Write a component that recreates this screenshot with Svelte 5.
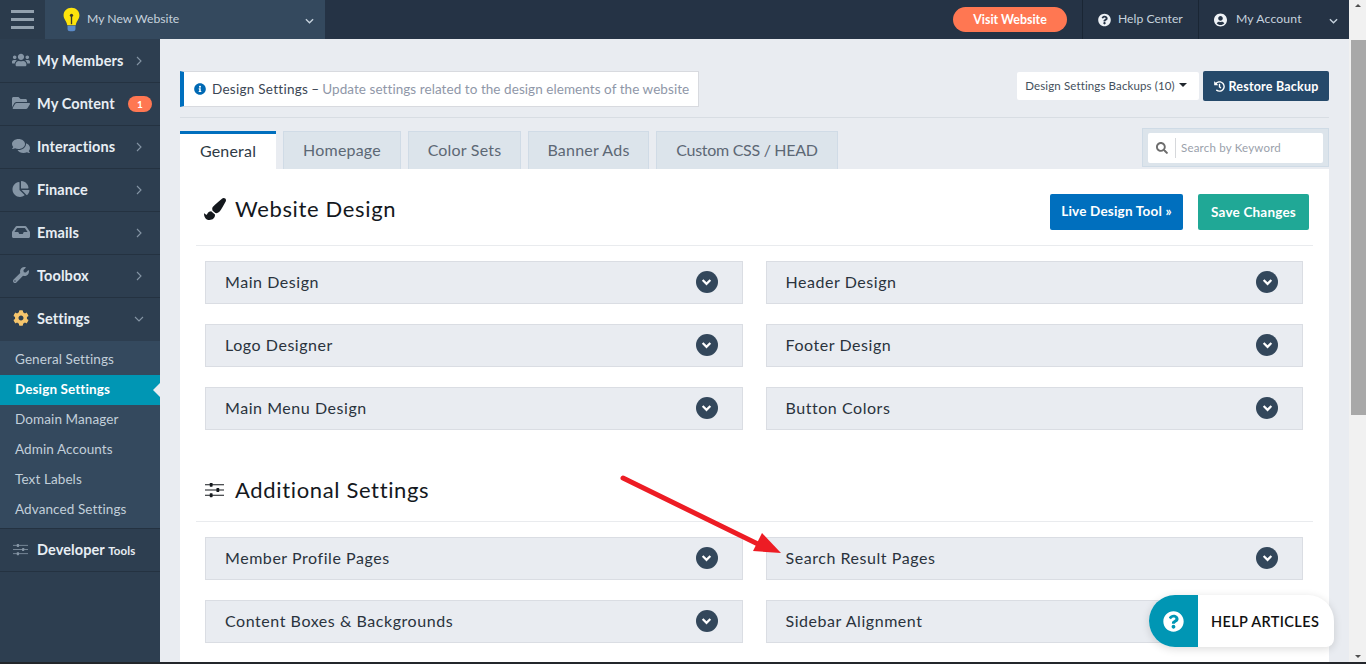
<script lang="ts">
	const icons: Record<string, [string, string]> = {
		users: ['0 0 640 512', 'M96 224c35.3 0 64-28.7 64-64s-28.7-64-64-64-64 28.7-64 64 28.7 64 64 64zm448 0c35.3 0 64-28.7 64-64s-28.7-64-64-64-64 28.7-64 64 28.7 64 64 64zm32 32h-64c-17.6 0-33.5 7.1-45.1 18.6 40.3 22.1 68.9 62 75.1 109.4h66c17.7 0 32-14.3 32-32v-32c0-35.3-28.7-64-64-64zm-256 0c61.9 0 112-50.1 112-112S381.9 32 320 32 208 82.1 208 144s50.1 112 112 112zm76.8 32h-8.3c-20.8 10-43.9 16-68.5 16s-47.6-6-68.5-16h-8.3C179.6 288 128 339.6 128 403.2V432c0 26.5 21.5 48 48 48h288c26.5 0 48-21.5 48-48v-28.8c0-63.6-51.6-115.2-115.2-115.2zm-223.7-13.4C161.5 263.1 145.6 256 128 256H64c-35.3 0-64 28.7-64 64v32c0 17.7 14.3 32 32 32h65.9c6.3-47.4 34.9-87.3 75.2-109.4z'],
		folder: ['0 0 576 512', 'M572.694 292.093L500.27 416.248A63.997 63.997 0 0 1 444.989 448H45.025c-18.523 0-30.064-20.093-20.731-36.093l72.424-124.155A64 64 0 0 1 152 256h399.964c18.523 0 30.064 20.093 20.73 36.093zM152 224h328v-48c0-26.51-21.49-48-48-48H272l-64-64H48C21.49 64 0 85.49 0 112v278.046l69.077-118.418C86.214 242.25 117.989 224 152 224z'],
		comments: ['0 0 576 512', 'M416 192c0-88.4-93.1-160-208-160S0 103.6 0 192c0 34.3 14.1 65.9 38 92-13.4 30.2-35.5 54.2-35.8 54.5-2.2 2.3-2.8 5.7-1.5 8.7S4.8 352 8 352c36.6 0 66.9-12.3 88.7-25 32.2 15.7 70.3 25 111.3 25 114.9 0 208-71.6 208-160zm122 220c23.9-26 38-57.7 38-92 0-66.9-53.5-124.2-129.3-148.1.9 6.6 1.3 13.3 1.3 20.1 0 105.9-107.7 192-240 192-10.8 0-21.3-.8-31.7-1.9C207.8 439.6 281.8 480 368 480c41 0 79.1-9.2 111.3-25 21.8 12.7 52.1 25 88.7 25 3.2 0 6.1-1.9 7.3-4.8 1.3-2.9.7-6.3-1.5-8.7-.3-.3-22.4-24.2-35.8-54.5z'],
		pie: ['0 0 544 512', 'M527.79 288H290.5l158.03 158.03c6.04 6.04 15.98 6.53 22.19.68 38.7-36.46 65.32-85.61 73.13-140.86 1.34-9.46-6.51-17.85-16.06-17.85zm-15.83-64.8C503.72 103.74 408.26 8.28 288.8.04 279.68-.59 272 7.1 272 16.24V240h223.77c9.14 0 16.82-7.68 16.19-16.8zM224 288V50.71c0-9.55-8.39-17.4-17.84-16.06C86.99 51.49-4.1 155.6.14 280.37 4.5 408.51 114.83 513.59 243.03 511.98c50.4-.63 96.97-16.87 135.26-44.03 7.9-5.6 8.42-17.23 1.57-24.08L224 288z'],
		inbox: ['0 0 576 512', 'M567.938 243.908L462.25 85.374A48.003 48.003 0 0 0 422.311 64H153.689a48 48 0 0 0-39.938 21.374L8.062 243.908A47.994 47.994 0 0 0 0 270.533V400c0 26.51 21.49 48 48 48h480c26.51 0 48-21.49 48-48V270.533a47.994 47.994 0 0 0-8.062-26.625zM162.252 128h251.497l85.333 128H376l-32 64H232l-32-64H76.918l85.334-128z'],
		wrench: ['0 0 512 512', 'M507.73 109.1c-2.24-9.03-13.54-12.09-20.12-5.51l-74.36 74.36-67.88-11.31-11.31-67.88 74.36-74.36c6.62-6.62 3.43-17.9-5.66-20.16-47.38-11.74-99.55.91-136.58 37.93-39.64 39.64-50.55 97.1-34.05 147.2L18.74 402.76c-24.99 24.99-24.99 65.51 0 90.5 24.99 24.99 65.51 24.99 90.5 0l213.21-213.21c50.12 16.71 107.47 5.68 147.37-34.22 37.07-37.07 49.7-89.32 37.91-136.73zM64 472c-13.25 0-24-10.75-24-24 0-13.26 10.75-24 24-24s24 10.74 24 24c0 13.25-10.75 24-24 24z'],
		cog: ['0 0 512 512', 'M487.4 315.7l-42.6-24.6c4.3-23.2 4.3-47 0-70.2l42.6-24.6c4.9-2.8 7.1-8.6 5.5-14-11.1-35.6-30-67.8-54.7-94.6-3.8-4.1-10-5.1-14.8-2.3L380.8 110c-17.9-15.4-38.5-27.3-60.8-35.1V25.8c0-5.6-3.9-10.5-9.4-11.7-36.7-8.2-74.3-7.8-109.2 0-5.5 1.2-9.4 6.1-9.4 11.7V75c-22.2 7.9-42.8 19.8-60.8 35.1L88.7 85.5c-4.9-2.8-11-1.9-14.8 2.3-24.7 26.7-43.6 58.9-54.7 94.6-1.7 5.4.6 11.2 5.5 14L67.3 221c-4.3 23.2-4.3 47 0 70.2l-42.6 24.6c-4.9 2.8-7.1 8.6-5.5 14 11.1 35.6 30 67.8 54.7 94.6 3.8 4.1 10 5.1 14.8 2.3l42.6-24.6c17.9 15.4 38.5 27.3 60.8 35.1v49.2c0 5.6 3.9 10.5 9.4 11.7 36.7 8.2 74.3 7.8 109.2 0 5.5-1.2 9.4-6.1 9.4-11.7v-49.2c22.2-7.9 42.8-19.8 60.8-35.1l42.6 24.6c4.9 2.8 11 1.9 14.8-2.3 24.7-26.7 43.6-58.9 54.7-94.6 1.5-5.5-.7-11.3-5.6-14.1zM256 336c-44.1 0-80-35.9-80-80s35.9-80 80-80 80 35.9 80 80-35.9 80-80 80z'],
		brush: ['0 0 512 512', 'M167.02 309.34c-40.12 2.58-76.53 17.86-97.19 72.3-2.35 6.21-8 9.98-14.59 9.98-11.11 0-45.46-27.67-55.25-34.35C0 439.62 37.93 512 128 512c75.86 0 128-43.77 128-120.19 0-3.11-.65-6.08-.97-9.13l-88.01-73.34zM457.89 0c-15.16 0-29.37 6.71-40.21 16.45C213.27 199.05 192 203.34 192 257.09c0 13.7 3.25 26.76 8.73 38.7l63.82 53.18c7.21 1.8 14.64 3.03 22.39 3.03 62.11 0 98.11-45.47 211.16-256.46 7.38-14.35 13.9-29.85 13.9-45.99C512 20.64 486 0 457.89 0z'],
		info: ['0 0 512 512', 'M256 8C119.043 8 8 119.083 8 256c0 136.997 111.043 248 248 248s248-111.003 248-248C504 119.083 392.957 8 256 8zm0 110c23.196 0 42 18.804 42 42s-18.804 42-42 42-42-18.804-42-42 18.804-42 42-42zm56 254c0 6.627-5.373 12-12 12h-88c-6.627 0-12-5.373-12-12v-24c0-6.627 5.373-12 12-12h12v-64h-12c-6.627 0-12-5.373-12-12v-24c0-6.627 5.373-12 12-12h64c6.627 0 12 5.373 12 12v100h12c6.627 0 12 5.373 12 12v24z'],
		question: ['0 0 512 512', 'M504 256c0 136.997-111.043 248-248 248S8 392.997 8 256C8 119.083 119.043 8 256 8s248 111.083 248 248zM262.655 90c-54.497 0-89.255 22.957-116.549 63.758-3.536 5.286-2.353 12.415 2.715 16.258l34.699 26.31c5.205 3.947 12.621 3.008 16.665-2.122 17.864-22.658 30.113-35.797 57.303-35.797 20.429 0 45.698 13.148 45.698 32.958 0 14.976-12.363 22.667-32.534 33.976C247.128 238.528 216 254.941 216 296v4c0 6.627 5.373 12 12 12h56c6.627 0 12-5.373 12-12v-1.333c0-28.462 83.186-29.647 83.186-106.667 0-58.002-60.165-102-116.531-102zM256 338c-25.365 0-46 20.635-46 46 0 25.364 20.635 46 46 46s46-20.636 46-46c0-25.365-20.635-46-46-46z'],
		account: ['0 0 496 512', 'M248 8C111 8 0 119 0 256s111 248 248 248 248-111 248-248S385 8 248 8zm0 96c48.6 0 88 39.4 88 88s-39.4 88-88 88-88-39.4-88-88 39.4-88 88-88zm0 344c-58.7 0-111.3-26.6-146.5-68.2 18.8-35.4 55.6-59.8 98.5-59.8 2.4 0 4.8.4 7.1 1.1 13 4.2 26.6 6.9 40.9 6.9 14.3 0 28-2.7 40.9-6.9 2.3-.7 4.7-1.1 7.1-1.1 42.9 0 79.7 24.4 98.5 59.8C359.3 421.4 306.7 448 248 448z'],
		history: ['0 0 512 512', 'M504 255.531c.253 136.64-111.18 248.372-247.82 248.468-59.015.042-113.223-20.53-155.822-54.911-11.077-8.94-11.905-25.541-1.839-35.607l11.267-11.267c8.609-8.609 22.353-9.551 31.891-1.984C173.062 425.135 212.781 440 256 440c101.705 0 184-82.311 184-184 0-101.705-82.311-184-184-184-48.814 0-93.149 18.969-126.068 49.932l50.754 50.754c10.08 10.08 2.941 27.314-11.313 27.314H24c-8.837 0-16-7.163-16-16V38.627c0-14.254 17.234-21.393 27.314-11.314l49.372 49.372C129.209 34.136 189.552 8 256 8c136.81 0 247.747 110.78 248 247.531zm-180.912 78.784l9.823-12.63c8.138-10.463 6.253-25.542-4.21-33.679L288 256.349V152c0-13.255-10.745-24-24-24h-16c-13.255 0-24 10.745-24 24v135.651l65.409 50.874c10.463 8.137 25.541 6.253 33.679-4.21z'],
		search: ['0 0 512 512', 'M505 442.7L405.3 343c-4.5-4.5-10.6-7-17-7H372c27.6-35.3 44-79.7 44-128C416 93.1 322.9 0 208 0S0 93.1 0 208s93.1 208 208 208c48.3 0 92.7-16.4 128-44v16.3c0 6.4 2.5 12.5 7 17l99.7 99.7c9.4 9.4 24.6 9.4 33.9 0l28.3-28.3c9.4-9.4 9.4-24.6.1-34zM208 336c-70.7 0-128-57.2-128-128 0-70.7 57.2-128 128-128 70.7 0 128 57.2 128 128 0 70.7-57.2 128-128 128z']
	};

	const menu = [
		{ label: 'My Members', icon: 'users', arrow: true },
		{ label: 'My Content', icon: 'folder', badge: '1' },
		{ label: 'Interactions', icon: 'comments', arrow: true },
		{ label: 'Finance', icon: 'pie', arrow: true },
		{ label: 'Emails', icon: 'inbox', arrow: true },
		{ label: 'Toolbox', icon: 'wrench', arrow: true }
	];
	const subMenu = ['General Settings', 'Design Settings', 'Domain Manager', 'Admin Accounts', 'Text Labels', 'Advanced Settings'];
	const tabs = ['General', 'Homepage', 'Color Sets', 'Banner Ads', 'Custom CSS / HEAD'];
	const designItems = ['Main Design', 'Header Design', 'Logo Designer', 'Footer Design', 'Main Menu Design', 'Button Colors'];
	const extraItems = ['Member Profile Pages', 'Search Result Pages', 'Content Boxes & Backgrounds', 'Sidebar Alignment'];
</script>

{#snippet icon(name: string, cls: string)}
	<svg class={cls} viewBox={icons[name][0]} aria-hidden="true"><path d={icons[name][1]} /></svg>
{/snippet}

{#snippet sliders(cls: string)}
	<svg class={cls} viewBox="0 0 20 16" aria-hidden="true">
		<path d="M0 2.5h20M0 8h20M0 13.5h20" fill="none" stroke="currentColor" stroke-width="1.1" />
		<rect x="5" y="0.5" width="3" height="4" rx="0.6" />
		<rect x="12" y="6" width="3" height="4" rx="0.6" />
		<rect x="5" y="11.5" width="3" height="4" rx="0.6" />
	</svg>
{/snippet}

{#snippet chevron(cls: string)}
	<svg class={cls} viewBox="0 0 10 6" aria-hidden="true"><path d="M1 1l4 4 4-4" fill="none" stroke="currentColor" stroke-width="1.5" /></svg>
{/snippet}

{#snippet item(label: string)}
	<div class="acc">
		<span>{label}</span>
		<span class="acc-dot">
			<svg viewBox="0 0 12 8" aria-hidden="true"><path d="M1.8 1.8L6 6l4.2-4.2" fill="none" stroke="currentColor" stroke-width="2.4" /></svg>
		</span>
	</div>
{/snippet}

<div class="app">
	<div class="window">
		<div class="page">
			<header class="topbar">
				<button class="burger" aria-label="Menu"><i></i><i></i><i></i></button>
				<div class="site">
					<svg class="bulb" viewBox="0 0 18 26" aria-hidden="true">
						<path d="M9 0.5C4.2 0.5 0.6 4 0.6 8.6c0 4.2 3.3 6.1 3.9 10.4h9c.6-4.3 3.9-6.2 3.9-10.4C17.4 4 13.8 0.5 9 0.5z" fill="#fde30b" />
						<path d="M9 18V9" stroke="#3a3a2a" stroke-width="1.4" />
						<circle cx="9" cy="8.6" r="1.7" fill="#3a3a2a" />
						<path d="M4.8 19.5h8.4v3.6c0 1.4-1.2 2.4-2.6 2.4H7.4c-1.4 0-2.6-1-2.6-2.4z" fill="#5b8bc9" />
					</svg>
					<span class="site-name">My New Website</span>
					{@render chevron('site-chev')}
				</div>
				<div class="top-right">
					<span class="visit">Visit Website</span>
					<span class="top-link help">{@render icon('question', 'top-ico')}<span class="top-text">Help Center</span></span>
					<span class="top-link account">{@render icon('account', 'top-ico')}<span class="top-text">My Account</span>{@render chevron('acc-chev')}</span>
				</div>
			</header>

			<div class="body">
				<nav class="sidebar">
					{#each menu as m}
						<div class="nav-item">
							{@render icon(m.icon, 'nav-ico')}
							<span class="nav-label">{m.label}</span>
							{#if m.badge}<span class="badge">{m.badge}</span>{/if}
							{#if m.arrow}
								<svg class="nav-arrow" viewBox="0 0 6 10" aria-hidden="true"><path d="M1 1l4 4-4 4" fill="none" stroke="currentColor" stroke-width="1.1" /></svg>
							{/if}
						</div>
					{/each}
					<div class="nav-item open">
						{@render icon('cog', 'nav-ico cog')}
						<span class="nav-label">Settings</span>
						<svg class="nav-down" viewBox="0 0 10 6" aria-hidden="true"><path d="M1 1l4 4 4-4" fill="none" stroke="currentColor" stroke-width="1.1" /></svg>
					</div>
					<div class="sub">
						{#each subMenu as s, i}
							<div class="sub-item" class:active={i === 1}>{s}</div>
						{/each}
					</div>
					<div class="nav-item dev">
						{@render sliders('dev-ico')}
						<span class="nav-label">Developer <small>Tools</small></span>
					</div>
				</nav>

				<main class="content">
					<div class="head">
						<div class="notice">
							{@render icon('info', 'info-ico')}
							<strong>Design Settings</strong>
							<span class="dash">–</span>
							<span class="muted">Update settings related to the design elements of the website</span>
						</div>
						<div class="head-actions">
							<span class="backups">Design Settings Backups (10)<i class="caret"></i></span>
							<span class="restore">{@render icon('history', 'hist-ico')}Restore Backup</span>
						</div>
					</div>

					<div class="tabs">
						{#each tabs as t, i}
							<span class="tab" class:current={i === 0}>{t}</span>
						{/each}
						<div class="search">
							<div class="search-inner">
								{@render icon('search', 'search-ico')}
								<span>Search by Keyword</span>
							</div>
						</div>
					</div>

					<section class="panel">
						<div class="section-head first">
							<h2>{@render icon('brush', 'h-ico')}Website Design</h2>
							<div class="head-btns">
								<span class="btn live">Live Design Tool »</span>
								<span class="btn save">Save Changes</span>
							</div>
						</div>
						<div class="grid">
							{#each designItems as d}{@render item(d)}{/each}
						</div>
						<div class="section-head second">
							<h2>{@render sliders('h-sliders')}Additional Settings</h2>
						</div>
						<div class="grid">
							{#each extraItems as d}{@render item(d)}{/each}
						</div>
					</section>
				</main>
			</div>
		</div>

		<div class="scrollbar">
			<i class="up"></i>
			<div class="thumb"></div>
			<i class="down"></i>
		</div>
	</div>
	<div class="bottom-edge"></div>

	<svg class="pointer" viewBox="0 0 170 90" aria-hidden="true">
		<path d="M3 3L146 73" stroke="#ed1c24" stroke-width="5" stroke-linecap="round" fill="none" />
		<path d="M142 58L161 78 133 76z" fill="#ed1c24" />
	</svg>

	<div class="help-widget">
		<span class="help-tab">{@render icon('question', 'help-ico')}</span>
		<span class="help-text">HELP ARTICLES</span>
	</div>
</div>

<style>
	:global(body) {
		margin: 0;
		overflow: hidden;
		font-family: 'Lato', 'Open Sans', sans-serif;
	}
	svg {
		fill: currentColor;
		display: block;
		flex: none;
	}
	.app {
		position: relative;
		height: 664px;
		display: flex;
		flex-direction: column;
		overflow: hidden;
		background: #e9ecf1;
	}
	.window {
		flex: 1;
		min-height: 0;
		display: flex;
	}
	.page {
		flex: 1;
		min-width: 0;
		display: flex;
		flex-direction: column;
	}
	.bottom-edge {
		height: 2px;
		background: #23262b;
	}

	/* top bar */
	.topbar {
		height: 39px;
		flex: none;
		display: flex;
		background: #253345;
		color: #dfe6ee;
	}
	.burger {
		width: 45px;
		padding: 0 11px;
		border: 0;
		background: #2b3b4c;
		display: flex;
		flex-direction: column;
		justify-content: center;
		gap: 5px;
	}
	.burger i {
		display: block;
		height: 3px;
		background: #93a1ae;
	}
	.site {
		width: 280px;
		background: #34495e;
		display: flex;
		align-items: center;
		padding: 0 11px 0 18px;
		box-sizing: border-box;
		font-size: 12.2px;
		color: #c6d2dd;
	}
	.site-name {
		padding-bottom: 2px;
	}
	.bulb {
		width: 17px;
		height: 25px;
		margin-right: 7px;
		margin-top: -1px;
	}
	.site-chev {
		width: 9px;
		height: 6px;
		margin-left: auto;
		margin-top: 2px;
	}
	.top-right {
		margin-left: auto;
		display: flex;
		align-items: center;
	}
	.visit {
		width: 114px;
		height: 25px;
		margin-right: 15px;
		margin-top: -1px;
		border-radius: 13px;
		background: #ff7752;
		color: #fff;
		font-size: 12.4px;
		font-weight: 700;
		display: flex;
		align-items: center;
		justify-content: center;
	}
	.top-link {
		height: 39px;
		display: flex;
		align-items: center;
		border-left: 1px solid #1a2634;
		font-size: 12.2px;
		color: #c6d2dd;
		box-sizing: border-box;
	}
	.top-text {
		padding-bottom: 2px;
	}
	.help {
		width: 116px;
		padding-left: 15px;
	}
	.account {
		width: 151px;
		padding-left: 15px;
		letter-spacing: 0.15px;
	}
	.top-ico {
		width: 13px;
		height: 14px;
		margin-right: 7px;
		color: #eef2f6;
	}
	.account .top-text {
		margin-left: 2px;
	}
	.acc-chev {
		width: 9px;
		height: 6px;
		margin-left: auto;
		margin-right: 11px;
		margin-top: 2px;
	}

	/* sidebar */
	.body {
		flex: 1;
		min-height: 0;
		display: flex;
	}
	.sidebar {
		width: 160px;
		flex: none;
		padding-top: 1px;
		background: #2d3e50;
	}
	.nav-item {
		height: 43px;
		box-sizing: border-box;
		border-bottom: 1px solid #243241;
		display: flex;
		align-items: center;
		padding-left: 12px;
		color: #e8eef4;
		font-size: 14.5px;
		font-weight: 700;
	}
	.nav-ico {
		width: 18px;
		height: 16px;
		margin-right: 7px;
		color: #8595a5;
		margin-top: -3px;
	}
	.nav-ico.cog {
		color: #f6c56c;
	}
	.nav-label {
		letter-spacing: 0.1px;
		white-space: nowrap;
		padding-bottom: 1px;
	}
	.nav-label small {
		font-size: 11.5px;
	}
	.nav-arrow {
		width: 6px;
		height: 10px;
		color: #8595a5;
		position: absolute;
		left: 136px;
		margin-top: -1px;
	}
	.nav-down {
		width: 10px;
		height: 6px;
		color: #8595a5;
		position: absolute;
		left: 134px;
	}
	.badge {
		position: absolute;
		left: 128px;
		width: 24px;
		height: 16px;
		border-radius: 8px;
		background: #ff7752;
		color: #fff;
		font-size: 10px;
		display: flex;
		align-items: center;
		justify-content: center;
	}
	.open {
		border-bottom-color: transparent;
	}
	.sub {
		background: #34495e;
		padding-top: 4px;
		border-bottom: 1px solid #243241;
		box-sizing: border-box;
		height: 188px;
	}
	.sub-item {
		height: 30px;
		box-sizing: border-box;
		padding: 0 0 2px 15px;
		display: flex;
		align-items: center;
		font-size: 13.5px;
		letter-spacing: 0.1px;
		color: #c2cfda;
		position: relative;
	}
	.sub-item.active {
		background: #0096b4;
		color: #fff;
		font-weight: 700;
	}
	.sub-item.active::after {
		content: '';
		position: absolute;
		right: 0;
		top: 8px;
		border: 7px solid transparent;
		border-left: 0;
		border-right-color: #e9ecf1;
	}
	.dev-ico {
		width: 15px;
		height: 13px;
		margin: -2px 9px 0 1px;
		color: #8595a5;
	}

	/* content */
	.content {
		flex: 1;
		min-width: 0;
		padding: 32px 20px 0;
		overflow: hidden;
	}
	.head {
		display: flex;
		justify-content: space-between;
		align-items: flex-start;
		padding-bottom: 10px;
		border-bottom: 1px solid #d8dde3;
		height: 36px;
	}
	.notice {
		height: 36px;
		box-sizing: border-box;
		width: 519px;
		background: #fff;
		border: 1px solid #d8dadf;
		border-left: 4px solid #006fbe;
		display: flex;
		align-items: center;
		padding-left: 10px;
		font-size: 13.5px;
		letter-spacing: 0.27px;
		white-space: nowrap;
		color: #3b4654;
	}
	.notice strong {
		font-weight: 400;
		margin-right: 3px;
	}
	.dash {
		margin-right: 3px;
	}
	.muted {
		color: #8f97a8;
		letter-spacing: 0.06px;
	}
	.info-ico {
		width: 12px;
		height: 12px;
		margin-right: 6px;
		color: #0069b4;
	}
	.head-actions {
		display: flex;
		gap: 4px;
		align-items: flex-start;
	}
	.backups {
		width: 182px;
		height: 28px;
		box-sizing: border-box;
		padding: 0 4px 2px 0;
		margin-top: 1px;
		background: #fff;
		display: flex;
		align-items: center;
		justify-content: center;
		font-size: 11.5px;
		letter-spacing: 0.12px;
		color: #444f5c;
		border-radius: 2px;
	}
	.caret {
		width: 0;
		height: 0;
		margin-left: 4px;
		border: 4px solid transparent;
		border-top-color: #20262d;
		border-bottom: 0;
	}
	.restore {
		width: 126px;
		height: 30px;
		background: #25496a;
		color: #fff;
		border-radius: 2px;
		display: flex;
		align-items: center;
		justify-content: center;
		font-size: 12.5px;
		font-weight: 700;
		letter-spacing: 0.2px;
	}
	.hist-ico {
		width: 11px;
		height: 11px;
		margin-right: 4px;
	}

	.tabs {
		display: flex;
		gap: 7px;
		align-items: flex-end;
		height: 41px;
		margin-top: 10px;
	}
	.tab {
		height: 38px;
		box-sizing: border-box;
		padding-bottom: 2px;
		background: #dce4eb;
		border: 1px solid #d0dbe6;
		border-bottom: 0;
		display: flex;
		align-items: center;
		justify-content: center;
		font-size: 16px;
		letter-spacing: 0.2px;
		color: #5c6875;
		white-space: nowrap;
	}
	.tab:nth-child(1) {
		width: 96px;
	}
	.tab:nth-child(2) {
		width: 118px;
	}
	.tab:nth-child(3) {
		width: 113px;
	}
	.tab:nth-child(4) {
		width: 121px;
	}
	.tab:nth-child(5) {
		width: 182px;
		letter-spacing: -0.3px;
	}
	.tab.current {
		background: #fff;
		border: 0;
		border-top: 3px solid #006fbe;
		color: #2e3a45;
	}
	.search {
		margin-left: auto;
		align-self: flex-start;
		width: 187px;
		height: 39px;
		box-sizing: border-box;
		background: #dce4eb;
		border: 1px solid #cfdbe6;
		padding: 4px 5px;
	}
	.search-inner {
		height: 30px;
		background: #fff;
		border-radius: 2px;
		display: flex;
		align-items: center;
		font-size: 11.5px;
		letter-spacing: 0.2px;
		color: #9aa1ab;
	}
	.search-ico {
		width: 12px;
		height: 12px;
		color: #6d6d6d;
		margin: 0 7px 0 8px;
	}
	.search-inner span {
		border-left: 1px solid #d6d8db;
		padding-left: 5px;
		line-height: 20px;
	}

	.panel {
		background: #fff;
		padding: 0 16px;
		height: 500px;
	}
	.section-head {
		display: flex;
		align-items: center;
		justify-content: space-between;
		border-bottom: 1px solid #e9ebee;
		padding-right: 4px;
		padding-left: 8px;
	}
	.section-head.first {
		height: 77px;
		padding-top: 3px;
		box-sizing: border-box;
	}
	.section-head.second {
		height: 45px;
		margin-top: 47px;
		box-sizing: border-box;
		align-items: flex-start;
	}
	h2 {
		margin: 0;
		display: flex;
		align-items: center;
		font-size: 22px;
		line-height: 26px;
		font-weight: 400;
		letter-spacing: 0.65px;
		color: #14181d;
	}
	.h-ico {
		width: 22px;
		height: 22px;
		margin-right: 9px;
		color: #14181d;
	}
	.h-sliders {
		width: 19px;
		height: 16px;
		margin: 0 11px 0 1px;
		color: #14181d;
	}
	.head-btns {
		display: flex;
		gap: 15px;
		margin-top: 6px;
	}
	.btn {
		height: 36px;
		box-sizing: border-box;
		border-radius: 2px;
		color: #fff;
		font-size: 13.5px;
		font-weight: 700;
		letter-spacing: 0.2px;
		display: flex;
		align-items: center;
		justify-content: center;
	}
	.live {
		width: 133px;
		padding-bottom: 2px;
		background: #006fbe;
	}
	.save {
		width: 111px;
		background: #20a896;
	}
	.grid {
		display: grid;
		grid-template-columns: 1fr 1fr;
		gap: 20px 23px;
		padding: 15px 10px 0 9px;
	}
	.acc {
		height: 43px;
		box-sizing: border-box;
		background: #e9ecf1;
		border: 1px solid #dadde3;
		display: flex;
		align-items: center;
		justify-content: space-between;
		padding: 0 24px 2px 19px;
		font-size: 16px;
		letter-spacing: 0.55px;
		color: #2a333d;
	}
	.acc-dot {
		width: 22px;
		height: 22px;
		border-radius: 50%;
		background: #33475b;
		color: #fff;
		display: flex;
		align-items: center;
		justify-content: center;
	}
	.acc-dot svg {
		width: 11px;
		height: 8px;
	}

	/* scrollbar */
	.scrollbar {
		width: 17px;
		flex: none;
		background: #f1f1f1;
		display: flex;
		flex-direction: column;
		align-items: flex-end;
	}
	.up,
	.down {
		width: 15px;
		height: 17px;
		flex: none;
		position: relative;
	}
	.up::before,
	.down::before {
		content: '';
		position: absolute;
		left: 4px;
		border: 3.5px solid transparent;
	}
	.up::before {
		top: 4px;
		border-top: 0;
		border-bottom-color: #505050;
	}
	.down::before {
		bottom: 4px;
		border-bottom: 0;
		border-top-color: #505050;
	}
	.thumb {
		width: 15px;
		height: 375px;
		margin-top: 23px;
		background: #a8a8a8;
		margin-bottom: auto;
	}

	/* overlays */
	.pointer {
		position: absolute;
		left: 620px;
		top: 475px;
		width: 170px;
		height: 90px;
	}
	.help-widget {
		position: absolute;
		left: 1149px;
		top: 595px;
		width: 185px;
		height: 52px;
		display: flex;
		background: #fff;
		border-radius: 26px 26px 8px 26px;
		box-shadow: 0 2px 8px rgba(0, 0, 0, 0.14);
		overflow: hidden;
	}
	.help-tab {
		width: 49px;
		background: #0096b4;
		display: flex;
		align-items: center;
		justify-content: center;
		color: #fff;
	}
	.help-ico {
		width: 21px;
		height: 21px;
	}
	.help-text {
		flex: 1;
		display: flex;
		align-items: center;
		padding-left: 13px;
		font-size: 14.5px;
		font-weight: 600;
		letter-spacing: 0.35px;
		color: #111;
	}
</style>
